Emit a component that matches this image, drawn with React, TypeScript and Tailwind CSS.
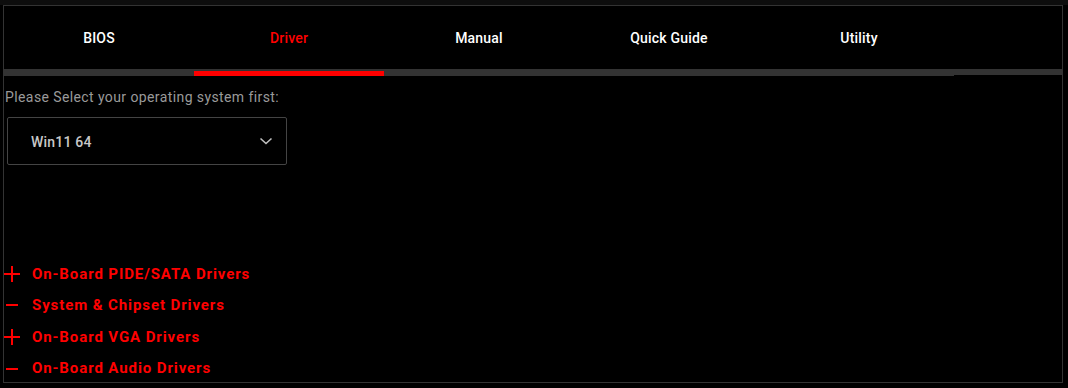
import React from "react";

const tabs = ["BIOS", "Driver", "Manual", "Quick Guide", "Utility"];
const items: { label: string; open: boolean }[] = [
  { label: "On-Board PIDE/SATA Drivers", open: false },
  { label: "System & Chipset Drivers", open: true },
  { label: "On-Board VGA Drivers", open: false },
  { label: "On-Board Audio Drivers", open: true },
];

function Plus() {
  return (
    <svg width="16" height="16" viewBox="0 0 16 16" className="block">
      <rect x="7" y="0" width="2" height="16" fill="#ff0000" />
      <rect x="0" y="7" width="16" height="2" fill="#ff0000" />
    </svg>
  );
}

function Minus() {
  return (
    <svg width="16" height="16" viewBox="0 0 16 16" className="block">
      <rect x="2" y="7" width="12" height="2" fill="#ff0000" />
    </svg>
  );
}

export default function App() {
  return (
    <div
      className="w-[1068px] h-[388px] bg-black overflow-hidden"
      style={{ fontFamily: "Roboto, 'Liberation Sans', sans-serif" }}
    >
      <div className="h-[5px] bg-[#0d0d0d]" />
      <div className="ml-[3px] w-[1060px] h-[378px] border border-[#333] flex flex-col">
        <div className="flex shrink-0">
          <div className="flex w-[950px]">
            {tabs.map((t, i) => (
              <div key={t} className="flex flex-col w-[190px]">
                <div
                  className={
                    "h-[63px] pt-[2px] flex items-center justify-center text-[14px] font-medium tracking-[0.2px] " +
                    (i === 1 ? "text-[#ff0000]" : "text-white")
                  }
                >
                  {t}
                </div>
                <div className="h-[7px] bg-[#333] flex flex-col justify-end">
                  {i === 1 && <div className="h-[5px] bg-[#ff0000]" />}
                </div>
              </div>
            ))}
          </div>
          <div className="flex-1 flex flex-col">
            <div className="h-[63px]" />
            <div className="h-[6px] bg-[#333]" />
          </div>
        </div>
        <div className="shrink-0 pl-[1px] mt-[11px] text-[14px] leading-[20px] tracking-[0.4px] text-[#9a9a9a]">
          Please Select your operating system first:
        </div>
        <div className="shrink-0 ml-[3px] mt-[10px] w-[280px] h-[48px] border border-[#444] rounded-[2px] flex items-center justify-between pl-[23px] pr-[13px]">
          <span className="pt-[3px] text-[14px] font-medium tracking-[0.2px] text-[#c8c8c8]">Win11 64</span>
          <svg width="14" height="10" viewBox="0 0 14 10" className="block">
            <path d="M1.5 2.5 L7 7.5 L12.5 2.5" fill="none" stroke="#c0c0c0" strokeWidth="1.6" />
          </svg>
        </div>
        <div className="shrink-0 mt-[93px] flex flex-col">
          {items.map((it) => (
            <div key={it.label} className="shrink-0 flex items-center h-[31.6px]">
              <div className="w-[28px] flex">{it.open ? <Minus /> : <Plus />}</div>
              <span className="text-[15px] font-bold tracking-[0.9px] text-[#ff0000]">{it.label}</span>
            </div>
          ))}
        </div>
      </div>
    </div>
  );
}
